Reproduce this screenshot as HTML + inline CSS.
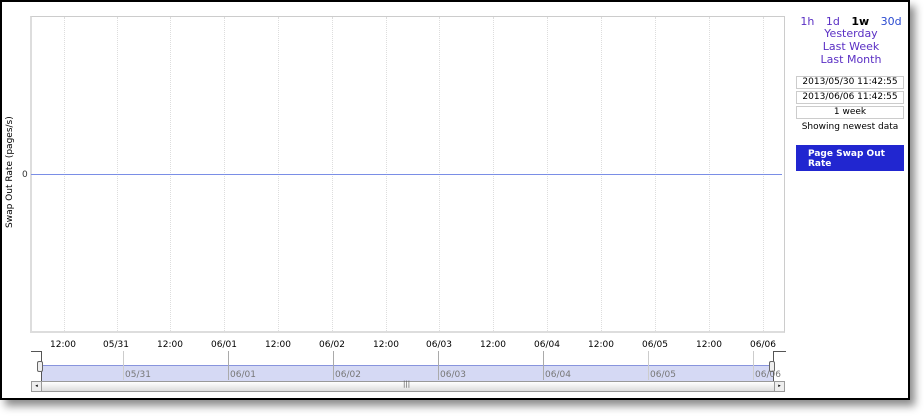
<!DOCTYPE html>
<html><head><style>
body{margin:0;width:924px;height:417px;background:#fff;font-family:"DejaVu Sans","Liberation Sans",sans-serif;position:relative;overflow:hidden}
.frame{position:absolute;left:0;top:0;width:906px;height:396px;border:2px solid #000;background:#fff;box-shadow:5px 6px 8px rgba(0,0,0,.45)}
.a{position:absolute}
.xl{position:absolute;top:340px;font-size:9px;color:#000;transform:translateX(-50%)}
.nl{position:absolute;top:370px;font-size:9px;color:#777}
.g{position:absolute;top:17px;height:314px;border-left:1px dotted #ddd}
.lnk{color:#5a2fc4;font-size:11px;text-align:center}
.box{position:absolute;left:796px;width:106px;height:11px;border:1px solid #ccc;font-size:9px;text-align:center;line-height:11px}
</style></head><body>
<div class="frame"></div>
<div class="a" style="left:30px;top:16px;width:752px;height:314px;border-left:2px solid #ddd;border-top:1px solid #ccc;border-right:1px solid #ccc;border-bottom:2px solid #ddd"></div>
<div class="g" style="left:64px"></div><div class="g" style="left:117px"></div><div class="g" style="left:170px"></div><div class="g" style="left:224px"></div><div class="g" style="left:278px"></div><div class="g" style="left:332px"></div><div class="g" style="left:386px"></div><div class="g" style="left:439px"></div><div class="g" style="left:493px"></div><div class="g" style="left:547px"></div><div class="g" style="left:601px"></div><div class="g" style="left:655px"></div><div class="g" style="left:709px"></div><div class="g" style="left:763px"></div>
<div class="a" style="left:31px;top:174px;width:751px;height:1px;background:#7a8ee6"></div>
<div class="a" style="left:22px;top:170px;font-size:9px;color:#333">0</div>
<div class="a" style="left:-45px;top:168px;width:110px;font-size:9px;color:#000;transform:rotate(-90deg);text-align:center;white-space:nowrap">Swap Out Rate (pages/s)</div>
<div class="xl" style="left:63px">12:00</div><div class="xl" style="left:116px">05/31</div><div class="xl" style="left:170px">12:00</div><div class="xl" style="left:224px">06/01</div><div class="xl" style="left:278px">12:00</div><div class="xl" style="left:332px">06/02</div><div class="xl" style="left:386px">12:00</div><div class="xl" style="left:439px">06/03</div><div class="xl" style="left:493px">12:00</div><div class="xl" style="left:547px">06/04</div><div class="xl" style="left:601px">12:00</div><div class="xl" style="left:655px">06/05</div><div class="xl" style="left:709px">12:00</div><div class="xl" style="left:763px">06/06</div>
<div class="a" style="left:41px;top:365px;width:733px;height:15px;background:#d5d9f4;border-top:1px solid #8894dd"></div>
<div class="a" style="left:31px;top:351px;width:10px;height:29px;border-top:1px solid #555;border-right:1px solid #555"></div>
<div class="a" style="left:773px;top:351px;width:12px;height:29px;border-top:1px solid #555;border-left:1px solid #555"></div>
<div class="a" style="left:37px;top:361px;width:4px;height:9px;border:1px solid #666;border-radius:2px;background:#eee"></div>
<div class="a" style="left:769px;top:361px;width:4px;height:9px;border:1px solid #666;border-radius:2px;background:#eee"></div>
<div class="a" style="left:123px;top:351px;height:29px;border-left:1px solid #ccc"></div><div class="nl" style="left:125px">05/31</div>
<div class="a" style="left:228px;top:351px;height:29px;border-left:1px solid #aaa"></div><div class="nl" style="left:230px">06/01</div>
<div class="a" style="left:333px;top:351px;height:29px;border-left:1px solid #aaa"></div><div class="nl" style="left:335px">06/02</div>
<div class="a" style="left:438px;top:351px;height:29px;border-left:1px solid #aaa"></div><div class="nl" style="left:440px">06/03</div>
<div class="a" style="left:543px;top:351px;height:29px;border-left:1px solid #aaa"></div><div class="nl" style="left:545px">06/04</div>
<div class="a" style="left:648px;top:351px;height:29px;border-left:1px solid #ccc"></div><div class="nl" style="left:650px">06/05</div>
<div class="a" style="left:753px;top:351px;height:29px;border-left:1px solid #ccc"></div><div class="nl" style="left:755px">06/06</div>
<div class="a" style="left:31px;top:381px;width:752px;height:9px;border:1px solid #999;border-radius:2px;background:linear-gradient(#fff,#ddd)"></div>
<div class="a" style="left:31px;top:381px;width:9px;height:9px;border:1px solid #999;background:#eee;font-size:5px;text-align:center;line-height:9px">◂</div>
<div class="a" style="left:774px;top:381px;width:9px;height:9px;border:1px solid #999;background:#eee;font-size:5px;text-align:center;line-height:9px">▸</div>
<div class="a" style="left:403px;top:380px;font-size:7px;color:#555">|||</div>
<div class="a" style="left:796px;top:15px;width:110px">
<div class="lnk" style="word-spacing:8px">1h 1d <b style="color:#000">1w</b> <span style="color:#2a4ad0">30d</span></div>
<div class="lnk" style="margin-top:-1px">Yesterday</div>
<div class="lnk">Last Week</div>
<div class="lnk">Last Month</div>
</div>
<div class="box" style="top:76px">2013/05/30 11:42:55</div>
<div class="box" style="top:91px">2013/06/06 11:42:55</div>
<div class="box" style="top:106px">1 week</div>
<div class="a" style="left:796px;top:122px;width:108px;text-align:center;font-size:9px">Showing newest data</div>
<div class="a" style="left:796px;top:145px;width:96px;height:26px;padding-left:12px;background:#2126d0;color:#fff;font-size:9px;font-weight:bold;line-height:10px;padding-top:4px;box-sizing:content-box;height:22px">Page Swap Out<br>Rate</div>
</body></html>
